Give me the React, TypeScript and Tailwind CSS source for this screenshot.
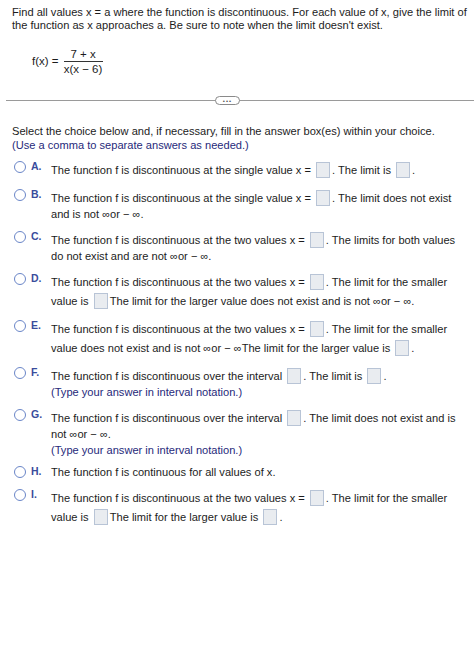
import React from "react";

const NAVY = "text-[#26297a]";

function Box() {
  return (
    <span className="inline-block h-[16px] w-[14px] align-[-4px] mt-[3px] mx-[2px] border border-[#b8c4d6] bg-[#e9ecf0]" />
  );
}

function Option({
  letter,
  children,
  className = "",
}: {
  letter: string;
  children: React.ReactNode;
  className?: string;
}) {
  return (
    <div className={"flex items-start " + className}>
      <span className="mt-[2px] ml-[14px] h-[12px] w-[12px] shrink-0 rounded-full border border-[#6a86c8] bg-white" />
      <span className="mt-[1px] ml-[5px] w-[20px] shrink-0 text-[10.5px] font-bold leading-[13px] text-[#3a4c9c]">
        {letter}.
      </span>
      <div className="flex-1 pr-[14px] leading-[16px]">{children}</div>
    </div>
  );
}

export default function App() {
  return (
    <div
      className="w-[474px] h-[658px] bg-white text-[#1c1c1c] text-[11.1px]"
      style={{ fontFamily: '"Liberation Sans", Arial, sans-serif' }}
    >
      {/* Question */}
      <div className="pl-[12px] pr-[4px] pt-[6px] leading-[13px]">
        Find all values x = a where the function is discontinuous. For each value of x, give the limit of the function as x approaches a. Be sure to note when the limit doesn't exist.
      </div>

      <div className="flex items-center pl-[32px] mt-[16px] text-[11.5px]">
        <span>f(x) =</span>
        <span className="ml-[5px] inline-flex flex-col items-center">
          <span className="leading-[12px]">7 + x</span>
          <span className="mt-[1px] h-px w-[39px] bg-[#333]" />
          <span className="leading-[13px] mt-[1px]">x(x − 6)</span>
        </span>
      </div>

      {/* Divider */}
      <div className="relative mt-[20px] ml-[6px] h-[9px]">
        <div className="absolute left-0 right-0 top-[4px] h-px bg-[#9a9a9a]" />
        <div className="absolute left-[209px] top-0 flex h-[9px] w-[25px] items-center justify-center rounded-full border border-[#8a8a8a] bg-white">
          <span className="text-[6px] leading-none tracking-[1px] text-[#555]">•••</span>
        </div>
      </div>

      {/* Instructions */}
      <div className="px-[12px] mt-[19px] leading-[14px]">
        <div>Select the choice below and, if necessary, fill in the answer box(es) within your choice.</div>
        <div className={NAVY}>(Use a comma to separate answers as needed.)</div>
      </div>

      <div className="mt-[7px] flex flex-col">
        <Option letter="A">
          The function f is discontinuous at the single value x = <Box />. The limit is <Box />.
        </Option>
        <Option letter="B" className="mt-[9px]">
          The function f is discontinuous at the single value x = <Box />. The limit does not exist and is not ∞or − ∞.
        </Option>
        <Option letter="C" className="mt-[7px]">
          The function f is discontinuous at the two values x = <Box />. The limits for both values do not exist and are not ∞or − ∞.
        </Option>
        <Option letter="D" className="mt-[7px]">
          The function f is discontinuous at the two values x = <Box />. The limit for the smaller value is <Box />The limit for the larger value does not exist and is not ∞or − ∞.
        </Option>
        <Option letter="E" className="mt-[9px]">
          The function f is discontinuous at the two values x = <Box />. The limit for the smaller value does not exist and is not ∞or − ∞The limit for the larger value is <Box />.
        </Option>
        <Option letter="F" className="mt-[9px]">
          The function f is discontinuous over the interval <Box />. The limit is <Box />.
          <div className={NAVY}>(Type your answer in interval notation.)</div>
        </Option>
        <Option letter="G" className="mt-[7px]">
          The function f is discontinuous over the interval <Box />. The limit does not exist and is not ∞or − ∞.
          <div className={NAVY}>(Type your answer in interval notation.)</div>
        </Option>
        <Option letter="H" className="mt-[6px]">
          The function f is continuous for all values of x.
        </Option>
        <Option letter="I" className="mt-[7px]">
          The function f is discontinuous at the two values x = <Box />. The limit for the smaller value is <Box />The limit for the larger value is <Box />.
        </Option>
      </div>
    </div>
  );
}
